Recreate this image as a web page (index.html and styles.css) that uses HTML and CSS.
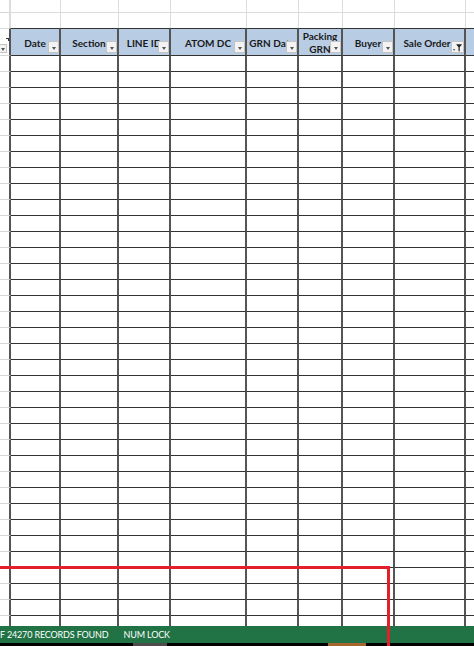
FILE: index.html
```html
<!DOCTYPE html>
<html>
<head>
<meta charset="utf-8">
<link rel="stylesheet" href="styles.css">
</head>
<body>
<div class="sheet">
  <div class="r g g1"><i></i><i></i><i></i><i></i><i></i><i></i><i></i><i></i><i></i><i></i></div>
  <div class="r g g2"><i></i><i></i><i></i><i></i><i></i><i></i><i></i><i></i><i></i><i></i></div>
  <div class="r h">
    <i class="hc0"><span class="tick"></span><span class="btn btn0"></span></i>
    <i><span class="t">Date</span><span class="btn"></span></i>
    <i><span class="t">Section</span><span class="btn"></span></i>
    <i><span class="t">LINE ID</span><span class="btn"></span></i>
    <i><span class="t">ATOM DC</span><span class="btn"></span></i>
    <i><span class="t">GRN Date</span><span class="btn"></span></i>
    <i><span class="t wrap">Packing GRN</span><span class="btn"></span></i>
    <i><span class="t">Buyer</span><span class="btn"></span></i>
    <i class="hso"><span class="t">Sale Order</span><span class="btn fbtn"><svg width="12" height="12" viewBox="0 0 12 12"><path d="M1 8.5h2.6L2.3 10z" fill="#333"/><path d="M4.5 3h6.5L8.4 6.2V10.5H7.1V6.2z" fill="#222"/></svg></span></i>
    <i></i>
  </div>
  <div class="r"><i></i><i></i><i></i><i></i><i></i><i></i><i></i><i></i><i></i><i></i></div>
  <div class="r"><i></i><i></i><i></i><i></i><i></i><i></i><i></i><i></i><i></i><i></i></div>
  <div class="r"><i></i><i></i><i></i><i></i><i></i><i></i><i></i><i></i><i></i><i></i></div>
  <div class="r"><i></i><i></i><i></i><i></i><i></i><i></i><i></i><i></i><i></i><i></i></div>
  <div class="r"><i></i><i></i><i></i><i></i><i></i><i></i><i></i><i></i><i></i><i></i></div>
  <div class="r"><i></i><i></i><i></i><i></i><i></i><i></i><i></i><i></i><i></i><i></i></div>
  <div class="r"><i></i><i></i><i></i><i></i><i></i><i></i><i></i><i></i><i></i><i></i></div>
  <div class="r"><i></i><i></i><i></i><i></i><i></i><i></i><i></i><i></i><i></i><i></i></div>
  <div class="r"><i></i><i></i><i></i><i></i><i></i><i></i><i></i><i></i><i></i><i></i></div>
  <div class="r"><i></i><i></i><i></i><i></i><i></i><i></i><i></i><i></i><i></i><i></i></div>
  <div class="r"><i></i><i></i><i></i><i></i><i></i><i></i><i></i><i></i><i></i><i></i></div>
  <div class="r"><i></i><i></i><i></i><i></i><i></i><i></i><i></i><i></i><i></i><i></i></div>
  <div class="r"><i></i><i></i><i></i><i></i><i></i><i></i><i></i><i></i><i></i><i></i></div>
  <div class="r"><i></i><i></i><i></i><i></i><i></i><i></i><i></i><i></i><i></i><i></i></div>
  <div class="r"><i></i><i></i><i></i><i></i><i></i><i></i><i></i><i></i><i></i><i></i></div>
  <div class="r"><i></i><i></i><i></i><i></i><i></i><i></i><i></i><i></i><i></i><i></i></div>
  <div class="r"><i></i><i></i><i></i><i></i><i></i><i></i><i></i><i></i><i></i><i></i></div>
  <div class="r"><i></i><i></i><i></i><i></i><i></i><i></i><i></i><i></i><i></i><i></i></div>
  <div class="r"><i></i><i></i><i></i><i></i><i></i><i></i><i></i><i></i><i></i><i></i></div>
  <div class="r"><i></i><i></i><i></i><i></i><i></i><i></i><i></i><i></i><i></i><i></i></div>
  <div class="r"><i></i><i></i><i></i><i></i><i></i><i></i><i></i><i></i><i></i><i></i></div>
  <div class="r"><i></i><i></i><i></i><i></i><i></i><i></i><i></i><i></i><i></i><i></i></div>
  <div class="r"><i></i><i></i><i></i><i></i><i></i><i></i><i></i><i></i><i></i><i></i></div>
  <div class="r"><i></i><i></i><i></i><i></i><i></i><i></i><i></i><i></i><i></i><i></i></div>
  <div class="r"><i></i><i></i><i></i><i></i><i></i><i></i><i></i><i></i><i></i><i></i></div>
  <div class="r"><i></i><i></i><i></i><i></i><i></i><i></i><i></i><i></i><i></i><i></i></div>
  <div class="r"><i></i><i></i><i></i><i></i><i></i><i></i><i></i><i></i><i></i><i></i></div>
  <div class="r"><i></i><i></i><i></i><i></i><i></i><i></i><i></i><i></i><i></i><i></i></div>
  <div class="r"><i></i><i></i><i></i><i></i><i></i><i></i><i></i><i></i><i></i><i></i></div>
  <div class="r"><i></i><i></i><i></i><i></i><i></i><i></i><i></i><i></i><i></i><i></i></div>
  <div class="r"><i></i><i></i><i></i><i></i><i></i><i></i><i></i><i></i><i></i><i></i></div>
  <div class="r"><i></i><i></i><i></i><i></i><i></i><i></i><i></i><i></i><i></i><i></i></div>
  <div class="r"><i></i><i></i><i></i><i></i><i></i><i></i><i></i><i></i><i></i><i></i></div>
  <div class="r"><i></i><i></i><i></i><i></i><i></i><i></i><i></i><i></i><i></i><i></i></div>
  <div class="r"><i></i><i></i><i></i><i></i><i></i><i></i><i></i><i></i><i></i><i></i></div>
  <div class="r"><i></i><i></i><i></i><i></i><i></i><i></i><i></i><i></i><i></i><i></i></div>
</div>
<div class="status">
  <span class="s1">F 24270 RECORDS FOUND</span>
  <span class="s2">NUM LOCK</span>
</div>
<div class="strip"><span></span><span class="seg-gray"></span><span></span><span class="seg-orange"></span><span></span></div>
<div class="sel"></div>
</body>
</html>
```
FILE: styles.css
```css
* { box-sizing: border-box; margin: 0; padding: 0; }
html, body { width: 474px; height: 646px; overflow: hidden; background: #fff; }
body {
  display: flex;
  flex-direction: column;
  position: relative;
  font-family: Lato, "Liberation Sans", sans-serif;
}
.sheet { flex: 1; overflow: hidden; }
.r {
  display: grid;
  grid-template-columns: 11px 50px 58px 52px 76px 52px 44px 52px 71px 1fr;
  height: 16px;
}
.r > i {
  display: block;
  font-style: normal;
  border-right: 2px solid #555;
  border-bottom: 1px solid #333;
}
.r > i:first-child { border-bottom-color: #d6d6d6; }
.r > i:last-child { border-right: none; }

.g > i { border-right: 1px solid #dcdcdc; border-bottom: 1px solid #dcdcdc; }
.g > i:first-child { border-right: 2px solid #dcdcdc; }
.g > i:last-child { border-right: none; }
.g1 { height: 13px; }
.g2 { height: 15px; }
.g2 > i { border-bottom: none; }

.h { height: 28px; }
.h > i {
  position: relative;
  background: #b8cce4;
  border-top: 1px solid #333;
  display: flex;
  align-items: center;
  justify-content: center;
  overflow: hidden;
  padding-top: 2px;
}
.h > i.hc0 { background: #fff; border-top: 1px solid #dcdcdc; border-bottom-color: #d6d6d6; }
.h > i.hso { padding-right: 5px; }
.t {
  font-weight: 700;
  font-size: 10px;
  color: #1a1a1a;
  white-space: nowrap;
  line-height: 13px;
  text-align: center;
}
.t.wrap { white-space: normal; line-height: 13px; }
.btn {
  position: absolute;
  right: 0;
  bottom: 2px;
  width: 11px;
  height: 12px;
  background: #f3f3f3;
  border: 1px solid #c4c4c4;
  display: flex;
  align-items: center;
  justify-content: center;
}
.btn::after {
  content: "";
  border-left: 2.5px solid transparent;
  border-right: 2.5px solid transparent;
  border-top: 3px solid #555;
  margin-top: 2px;
}
.btn0 { right: 2px; width: 8px; height: 9px; border-left: none; }
.fbtn::after { display: none; }
.fbtn { width: 13px; }
.tick {
  position: absolute;
  right: 0;
  top: 9px;
  width: 3px;
  height: 3px;
  border-top: 1px solid #333;
  border-right: 1px solid #333;
}

.status {
  height: 17px;
  background: #217346;
  color: #fff;
  font-family: Lato, "Liberation Sans", sans-serif;
  font-size: 9px;
  letter-spacing: -0.15px;
  display: flex;
  align-items: center;
  white-space: nowrap;
}
.s1 { margin-left: 0; }
.s2 { margin-left: 15px; }
.strip {
  height: 3px;
  background: #000;
  display: grid;
  grid-template-columns: 133px 34px 161px 38px 1fr;
}
.seg-gray { background: #4d4d4d; }
.seg-orange { background: #a5652d; }
.sel {
  position: absolute;
  left: 0;
  top: 566px;
  width: 390px;
  height: 90px;
  border-top: 3px solid #e3202a;
  border-right: 3px solid #e3202a;
  pointer-events: none;
}
```
